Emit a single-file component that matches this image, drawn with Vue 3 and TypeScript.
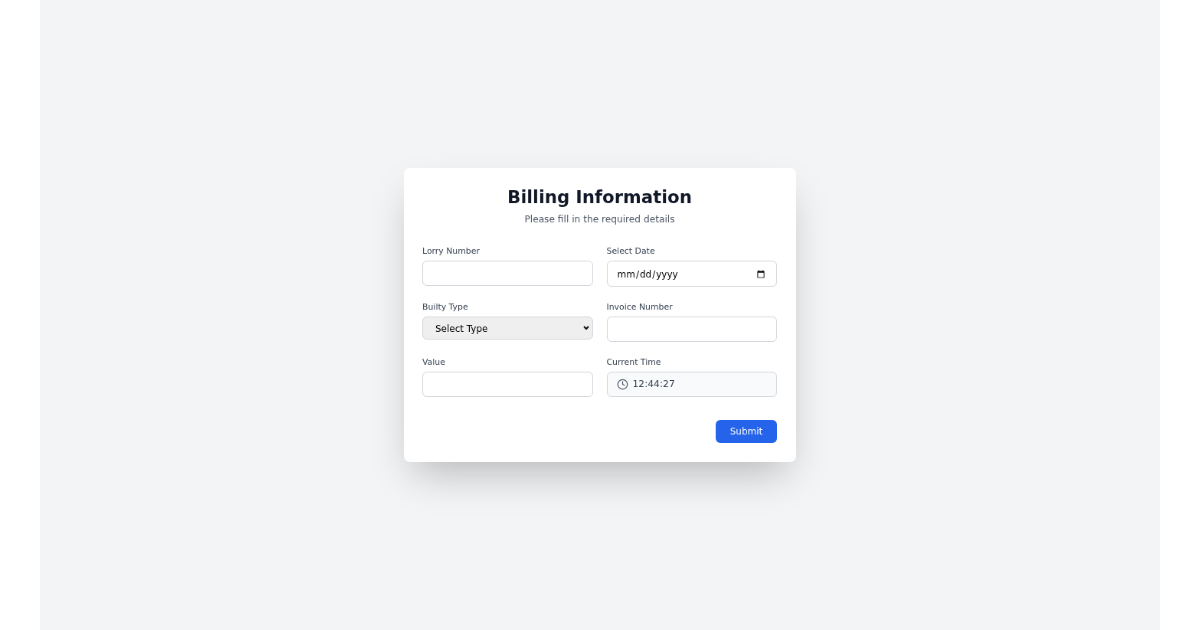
<script setup lang="ts">
import { ref } from 'vue'
const lorry = ref('')
const date = ref('')
const type = ref('')
const invoice = ref('')
const value = ref('')
const time = ref('12:44:27')
</script>

<template>
  <div class="page">
    <form class="card" @submit.prevent>
      <header class="head">
        <h1>Billing Information</h1>
        <p>Please fill in the required details</p>
      </header>
      <div class="grid">
        <div class="field">
          <label for="lorry">Lorry Number</label>
          <input id="lorry" v-model="lorry" class="control" type="text" />
        </div>
        <div class="field">
          <label for="date">Select Date</label>
          <input id="date" v-model="date" class="control" type="date" />
        </div>
        <div class="field">
          <label for="type">Builty Type</label>
          <div class="select-wrap">
            <select id="type" v-model="type" class="control select">
              <option value="">Select Type</option>
              <option value="a">Type A</option>
            </select>
            <svg class="chevron" viewBox="0 0 8 6" width="8" height="6" fill="none" stroke="currentColor" stroke-width="2">
              <path d="M1 1l3 3 3-3" />
            </svg>
          </div>
        </div>
        <div class="field">
          <label for="invoice">Invoice Number</label>
          <input id="invoice" v-model="invoice" class="control" type="text" />
        </div>
        <div class="field">
          <label for="value">Value</label>
          <input id="value" v-model="value" class="control" type="text" />
        </div>
        <div class="field">
          <label>Current Time</label>
          <div class="control time">
            <svg viewBox="0 0 24 24" width="15" height="15" fill="none" stroke="currentColor" stroke-width="2" stroke-linecap="round" stroke-linejoin="round">
              <circle cx="12" cy="12" r="10" />
              <path d="M12 6v6l4 2" />
            </svg>
            <span>{{ time }}</span>
          </div>
        </div>
      </div>
      <div class="actions">
        <button type="submit">Submit</button>
      </div>
    </form>
  </div>
</template>

<style>
body { background: #fff; }
</style>

<style scoped>
.page {
  box-sizing: border-box;
  width: 1120px;
  height: 630px;
  margin: 0 auto;
  background: #f3f4f6;
  display: flex;
  align-items: center;
  justify-content: center;
  font-family: "DejaVu Sans", sans-serif;
  overflow: hidden;
}
.card {
  box-sizing: border-box;
  flex: none;
  width: 512px;
  height: 384px;
  padding: 24px 25px 24px 24px;
  background: #fff;
  border-radius: 8px;
  box-shadow: 0 25px 50px -12px rgba(0, 0, 0, 0.25);
  transform: scale(0.766);
  will-change: transform;
}
.head { text-align: center; margin: 0 -0.5px 26.7px; }
h1 {
  margin: 0;
  font-size: 22.85px;
  line-height: 28px;
  font-weight: 700;
  color: #111827;
}
.head p {
  margin: 8px 0 0;
  font-size: 12.2px;
  line-height: 15px;
  color: #4b5563;
}
.grid {
  display: grid;
  grid-template-columns: 1fr 1fr;
  column-gap: 18px;
  row-gap: 19.7px;
}
.field { display: flex; flex-direction: column; min-width: 0; }
label {
  font-size: 10.9px;
  line-height: 13px;
  margin-bottom: 6.3px;
  color: #374151;
}
.control {
  box-sizing: border-box;
  width: 100%;
  height: 33px;
  padding: 0 12px;
  border: 1px solid #d1d5db;
  border-radius: 6px;
  background: #fff;
  font-family: inherit;
  font-size: 12px;
  color: #000;
  outline: none;
}
input[type="date"].control { height: 34px; padding-top: 2px; }
.select-wrap { position: relative; height: 30px; }
.select {
  display: block;
  height: 30px;
  padding: 2px 12px 0 16px;
  background-color: #efefef;
  appearance: none;
}
.chevron {
  position: absolute;
  right: 5px;
  top: 12px;
  color: #111;
  pointer-events: none;
}
.time {
  display: flex;
  align-items: center;
  gap: 6px;
  background: #f9fafb;
  color: #374151;
  font-size: 12.3px;
}
.time svg { color: #4b5563; flex: none; }
.actions { display: flex; justify-content: flex-end; margin-top: 30px; }
button {
  width: 80px;
  height: 30px;
  padding: 0;
  border: none;
  border-radius: 6px;
  background: #2563eb;
  color: #fff;
  font-family: inherit;
  font-size: 12px;
}
</style>
